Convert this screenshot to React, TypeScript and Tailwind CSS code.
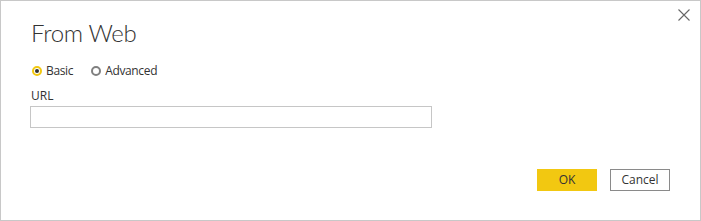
import React from "react";

function Radio({ checked, label }: { checked?: boolean; label: string }) {
  return (
    <label className="flex items-center gap-[4px]">
      <span
        className={
          "flex h-[10px] w-[10px] items-center justify-center rounded-full border-2 " +
          (checked ? "border-[#f2c811]" : "border-[#808080]")
        }
      >
        {checked && <span className="h-[4px] w-[4px] rounded-full bg-[#333333]" />}
      </span>
      <span>{label}</span>
    </label>
  );
}

export default function App() {
  return (
    <div
      className="relative flex h-[221px] w-[701px] flex-col border border-[#c8c8c8] bg-white pl-[29px] pr-[30px] pt-[16px] text-[#333333]"
      style={{ fontFamily: '"Open Sans", "Noto Sans", sans-serif' }}
    >
      <button className="absolute right-[10px] top-[8px] h-[12px] w-[12px]" aria-label="Close">
        <svg viewBox="0 0 12 12" width="12" height="12" fill="none" stroke="#666666" strokeWidth="1.1">
          <path d="M0.5 0.5 L11.5 11.5 M11.5 0.5 L0.5 11.5" />
        </svg>
      </button>
      <h1
        className="ml-[1px] text-[24px] font-light leading-[32px] tracking-[-0.3px]"
        style={{ fontFamily: 'Lato, "Open Sans", sans-serif' }}
      >
        From Web
      </h1>
      <div className="ml-[2px] mt-[14px] flex h-[16px] items-center gap-[18px] text-[12px] leading-[16px] tracking-[-0.35px]">
        <Radio checked label="Basic" />
        <Radio label="Advanced" />
      </div>
      <div className="ml-[1px] mt-[9px] text-[12px] leading-[16px]">URL</div>
      <input className="mt-[2px] h-[22px] w-[402px] border border-[#c6c6c6] bg-white outline-none" />
      <div className="mt-[41px] flex justify-end gap-[13px] text-[12px]">
        <button className="h-[22px] w-[60px] bg-[#f2c811] text-[#333333]">OK</button>
        <button className="h-[22px] w-[60px] border border-[#8a8a8a] bg-white text-[#333333]">Cancel</button>
      </div>
    </div>
  );
}
